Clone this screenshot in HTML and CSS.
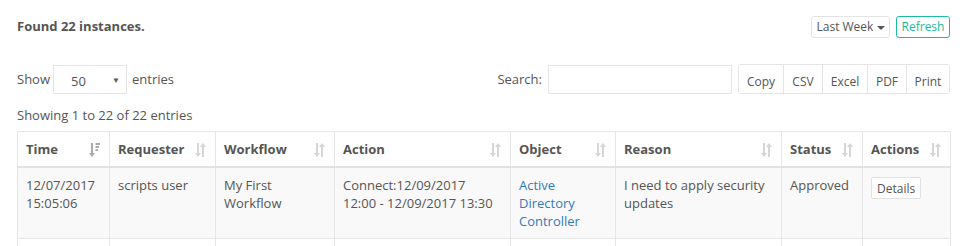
FILE: index.html
```html
<!DOCTYPE html>
<html>
<head>
<meta charset="utf-8">
<link rel="stylesheet" href="styles.css">
</head>
<body>
<div class="page">
  <div class="topbar">
    <div class="found">Found 22 instances.</div>
    <div class="topbtns">
      <button class="btn lastweek">Last Week <span class="caret"></span></button>
      <button class="btn refresh">Refresh</button>
    </div>
  </div>
  <div class="controls">
    <div class="length">
      <span>Show</span>
      <div class="select"><span class="val">50</span><span class="tri">▼</span></div>
      <span>entries</span>
    </div>
    <div class="right">
      <label class="search">Search:</label>
      <div class="input"></div>
      <div class="group">
        <button class="gbtn">Copy</button><button class="gbtn">CSV</button><button class="gbtn">Excel</button><button class="gbtn">PDF</button><button class="gbtn">Print</button>
      </div>
    </div>
  </div>
  <div class="info">Showing 1 to 22 of 22 entries</div>
  <table class="tbl">
    <colgroup>
      <col style="width:92px"><col style="width:106px"><col style="width:119px"><col style="width:176px"><col style="width:105px"><col style="width:166px"><col style="width:81px"><col style="width:88px">
    </colgroup>
    <thead>
      <tr>
        <th class="sorted">Time<svg class="si" viewBox="0 0 11 16"><path d="M2 1h2v10h2l-3 4-3-4h2z" fill="#aaa"/><rect x="6.5" y="1" width="4.5" height="2" fill="#aaa"/><rect x="6.5" y="4" width="3.5" height="2" fill="#aaa"/><rect x="6.5" y="7" width="2.5" height="2" fill="#aaa"/></svg></th>
        <th>Requester<svg class="si" viewBox="0 0 11 16"><path d="M2 1h2v10h2l-3 4-3-4h2z" fill="#d6d6d6"/><path d="M7 15h2V5h2L8 1 5 5h2z" fill="#d6d6d6"/></svg></th>
        <th>Workflow<svg class="si" viewBox="0 0 11 16"><path d="M2 1h2v10h2l-3 4-3-4h2z" fill="#d6d6d6"/><path d="M7 15h2V5h2L8 1 5 5h2z" fill="#d6d6d6"/></svg></th>
        <th>Action<svg class="si" viewBox="0 0 11 16"><path d="M2 1h2v10h2l-3 4-3-4h2z" fill="#d6d6d6"/><path d="M7 15h2V5h2L8 1 5 5h2z" fill="#d6d6d6"/></svg></th>
        <th>Object<svg class="si" viewBox="0 0 11 16"><path d="M2 1h2v10h2l-3 4-3-4h2z" fill="#d6d6d6"/><path d="M7 15h2V5h2L8 1 5 5h2z" fill="#d6d6d6"/></svg></th>
        <th>Reason<svg class="si" viewBox="0 0 11 16"><path d="M2 1h2v10h2l-3 4-3-4h2z" fill="#d6d6d6"/><path d="M7 15h2V5h2L8 1 5 5h2z" fill="#d6d6d6"/></svg></th>
        <th>Status<svg class="si" viewBox="0 0 11 16"><path d="M2 1h2v10h2l-3 4-3-4h2z" fill="#d6d6d6"/><path d="M7 15h2V5h2L8 1 5 5h2z" fill="#d6d6d6"/></svg></th>
        <th>Actions<svg class="si" viewBox="0 0 11 16"><path d="M2 1h2v10h2l-3 4-3-4h2z" fill="#d6d6d6"/><path d="M7 15h2V5h2L8 1 5 5h2z" fill="#d6d6d6"/></svg></th>
      </tr>
    </thead>
    <tbody>
      <tr class="odd">
        <td>12/07/2017<br>15:05:06<br>&nbsp;</td>
        <td>scripts user</td>
        <td>My First<br>Workflow</td>
        <td>Connect:12/09/2017<br>12:00 - 12/09/2017 13:30</td>
        <td><a class="lnk">Active<br>Directory<br>Controller</a></td>
        <td>I need to apply security<br>updates</td>
        <td>Approved</td>
        <td><button class="det">Details</button></td>
      </tr>
      <tr class="even">
        <td>&nbsp;</td><td></td><td></td><td></td><td></td><td></td><td></td><td></td>
      </tr>
    </tbody>
  </table>
</div>
</body>
</html>
```
FILE: styles.css
```css
* { box-sizing: border-box; }
html, body { margin: 0; padding: 0; background: #fff; }
html { height: 246px; overflow: hidden; }
body {
  font-family: "Open Sans", "Liberation Sans", sans-serif;
  font-size: 13px;
  color: #555;
}
.page { padding: 16px 24px 0 17px; width: 974px; }
.topbar { display: flex; justify-content: space-between; align-items: flex-start; height: 48px; }
.found { font-weight: 700; margin-top: 1px; line-height: 18px; }
.topbtns { display: flex; gap: 6px; }
.btn {
  font-family: inherit; font-size: 12px; height: 22px; padding: 0 5px;
  background: #fff; border: 1px solid #e4e4e4; border-radius: 3px; color: #555; line-height: 20px;
  white-space: nowrap;
}
.lastweek { width: 79px; padding: 0 4px; }
.caret {
  display: inline-block; width: 0; height: 0; vertical-align: middle; margin-left: 0;
  border-left: 4px solid transparent; border-right: 4px solid transparent; border-top: 4px solid #555;
}
.refresh { color: #1abc9c; border-color: #1abc9c; width: 54px; padding: 0; }
.controls { display: flex; justify-content: space-between; align-items: center; height: 30px; }
.length { display: flex; align-items: center; }
.select {
  width: 74px; height: 29px; border: 1px solid #e5e5e5; display: flex; align-items: center;
  justify-content: space-between; padding: 0 6px 0 17px; margin: 0 5px 0 3px;
}
.select .val { margin-top: 4px; font-size: 13px; }
.select .tri { font-size: 8px; color: #555; }
.right { display: flex; align-items: center; }
.search { margin-right: 6px; }
.input { width: 184px; height: 29px; border: 1px solid #e5e5e5; }
.group { display: flex; margin-left: 6px; border: 1px solid #e5e5e5; border-radius: 3px; height: 30px; }
.gbtn {
  font-family: inherit; font-size: 12px; color: #555; background: #fff; border: 0;
  border-left: 1px solid #e5e5e5; padding: 4px 0 0; height: 28px;
}
.gbtn:first-child { border-left: 0; width: 44px; }
.gbtn:nth-child(2) { width: 39px; }
.gbtn:nth-child(3) { width: 45px; }
.gbtn:nth-child(4) { width: 39px; }
.gbtn:nth-child(5) { width: 43px; }
.info { margin-top: 12px; line-height: 18px; height: 25px; }
.tbl { border-collapse: collapse; table-layout: fixed; width: 933px; border: 1px solid #e7e7e7; }
.tbl th, .tbl td { border: 1px solid #e7e7e7; padding: 8px 8px; line-height: 18px; text-align: left; vertical-align: top; }
.tbl th { font-weight: 700; position: relative; border-bottom: 2px solid #e2e2e2; white-space: nowrap; }
.si { position: absolute; right: 9px; top: 10px; width: 11px; height: 16px; }
.odd td { background: #f9f9f9; }
.even td { background: #fff; }
.lnk { color: #337ab7; text-decoration: none; }
.det {
  font-family: inherit; font-size: 12px; color: #555; background: #fff; border: 1px solid #e2e2e2;
  border-radius: 2px; height: 22px; padding: 0 5px; margin-top: 1px;
}
```
